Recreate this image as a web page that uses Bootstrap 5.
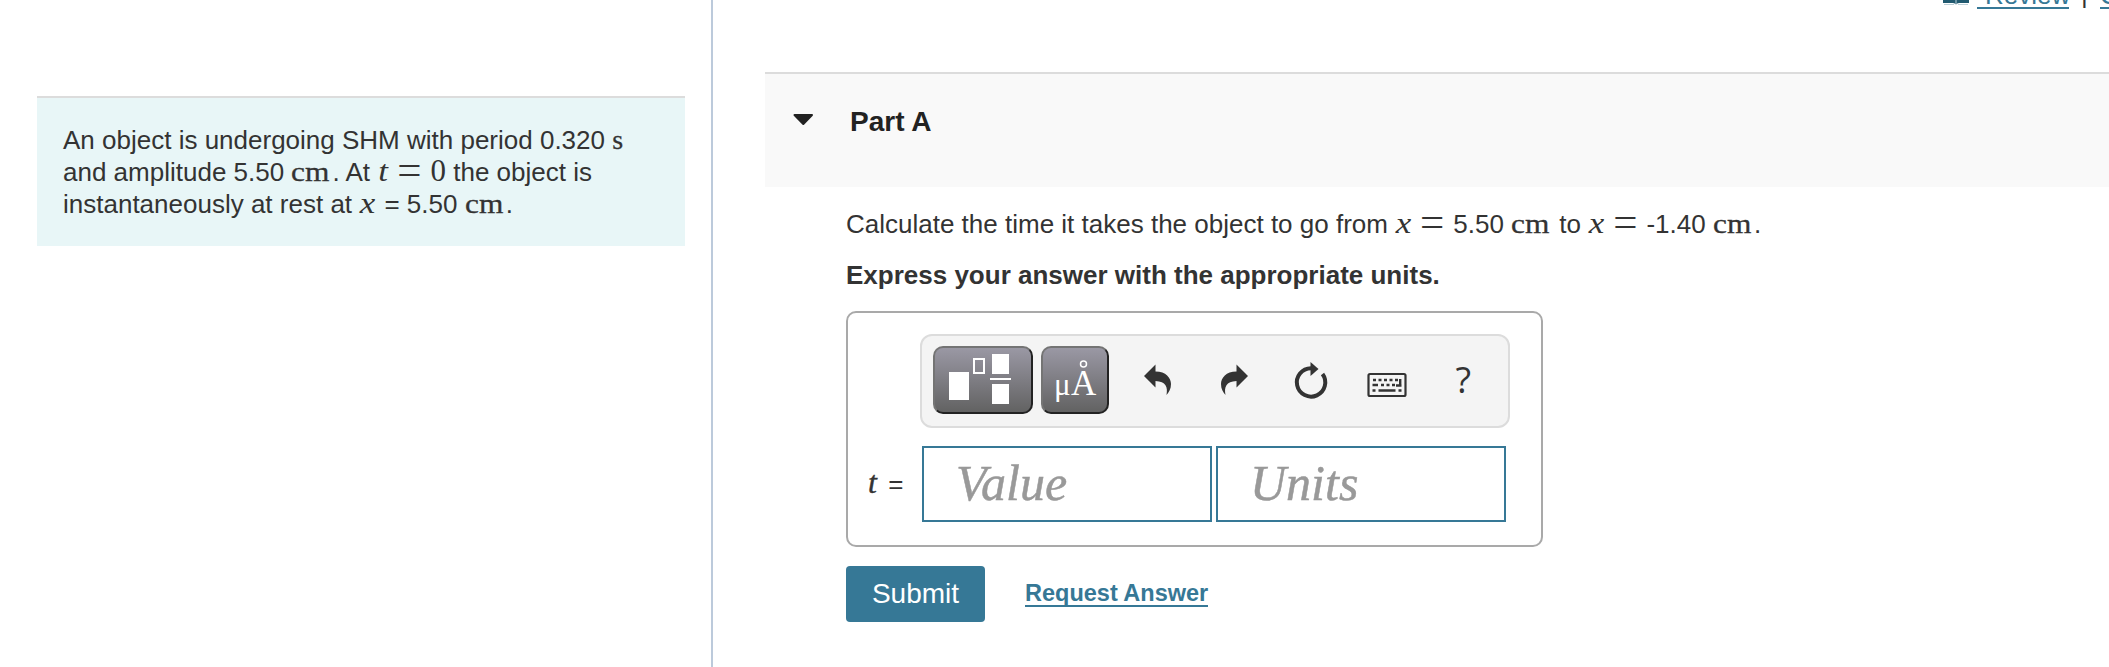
<!DOCTYPE html>
<html lang="en">
<head>
<meta charset="utf-8">
<title>Part A</title>
<link href="https://cdn.jsdelivr.net/npm/bootstrap@5.3.0/dist/css/bootstrap.min.css" rel="stylesheet">
<style>
body{font-family:"Liberation Sans",Arial,sans-serif;font-size:26px;line-height:32px;color:#333;background:#fff;height:667px;overflow:hidden}
.left-pane{width:713px;height:667px;border-right:2px solid #bccadb;padding:96px 26px 0 37px}
.intro{height:150px;background:#e8f6f7;border-top:2px solid #dcdcdc;padding:26px 0 0 26px;white-space:nowrap}
.right-pane{padding-left:52px;height:667px}
.top-links{height:72px;padding-left:1178px;color:#333;white-space:nowrap}
.top-links .linkrow{margin-top:-19px;height:32px}
.top-links a,.req{color:#367896;text-decoration:none;border-bottom:2px solid #367896}
.top-links a{line-height:28px;height:28px;display:block}
.part-head{height:115px;background:#f9f9f9;border-top:2px solid #dcdcdc;padding:0 0 0 28px}
.part-head h2{font-size:28px;line-height:32px;margin:32px 0 0 35px;color:#222;font-weight:700}
.part-head svg{margin-top:40px}
.part-body{padding-left:81px}
.question{margin-top:21px;white-space:nowrap}
.direct{margin-top:19px;font-weight:700}
.un,.var,.eq,.num{font-family:"Liberation Serif",serif;line-height:0;display:inline-block}
.un{font-size:28px;-webkit-text-stroke:.3px #333}
.un.c{width:35.500px;margin-right:5.500px;transform:scaleX(1.12);transform-origin:left}
.var{font-style:italic;font-size:29px;transform:scaleX(1.2);margin:0 3px 0 2px}
.eq{font-size:43px;transform:translate(-1px,3px);margin:0 8px}
.num{font-size:31px}
.answer{width:697px;height:236px;margin-top:20px;border:2px solid #a9a9a9;border-radius:10px;padding:21px 0 0 21px}
.tools{margin-left:51px;width:590px;height:94px;border:2px solid #dcdcdc;border-radius:12px;background:#f4f4f4;padding:10px 0 0 11px}
.tool-btn{height:68px;border:2px solid;border-color:#747474 #222 #222 #747474;border-radius:10px;background:linear-gradient(#9a98a4,#626262);padding:0}
.fields{margin-top:18px}
.lab{width:53px;padding-top:22px}
.lab .var{margin:0 4px 0 -1px;font-size:32px;transform:none;-webkit-text-stroke:.4px #333}
.entry{width:290px;height:76px;border:2px solid #367896;border-radius:0;padding:0 0 2px 32px;margin-right:4px;font:italic 50px/70px "Liberation Serif",serif}
.entry::placeholder{color:#999;opacity:1;-webkit-text-stroke:.5px #999}
.submit{width:139px;height:56px;background:#367896;color:#fff;border:0;border-radius:4px;font-size:28px;padding:0}
.req{font-size:23.5px;line-height:25px;font-weight:700;margin:0 0 0 40px;height:26px}
</style>
</head>
<body>
<div class="d-flex">
  <aside class="left-pane flex-shrink-0">
    <div class="intro">An object is undergoing SHM with period 0.320 <span class="un">s</span><br>and amplitude 5.50 <span class="un c">cm</span>. At <span class="var">t</span><span class="eq">=</span><span class="num">0</span> the object is<br>instantaneously at rest at <span class="var">x</span> = 5.50 <span class="un c">cm</span>.</div>
  </aside>
  <main class="right-pane flex-grow-1 overflow-hidden">
    <div class="top-links overflow-hidden"><div class="linkrow d-flex">
      <svg class="flex-shrink-0" width="26" height="26" viewBox="0 0 26 26"><path fill="#215a70" d="M0 2Q7 0 13 3Q19 0 26 2V22H16Q14 22 13 23.500Q12 22 10 22H0z"/><path stroke="#bcd0d8" fill="none" d="M13 3V23M1 23.500H11M15 23.500H25"/></svg>
      <a class="flex-shrink-0" href="#" style="margin-left:8px;width:92px;padding-left:8px">Review</a><span style="margin:-3px 12px 0 12px">|</span><a class="flex-shrink-0" href="#">Constants</a>
    </div></div>
    <header class="part-head d-flex align-items-start">
      <svg width="22" height="14" viewBox="0 0 22 14"><path fill="#222" stroke="#222" stroke-width="2" stroke-linejoin="round" d="M1.500 1H19L10.300 10z"/></svg>
      <h2>Part A</h2>
    </header>
    <section class="part-body">
      <div class="question">Calculate the time it takes the object to go from <span class="var">x</span><span class="eq">=</span>5.50 <span class="un c">cm</span> to <span class="var">x</span><span class="eq">=</span>-1.40 <span class="un c">cm</span>.</div>
      <div class="direct">Express your answer with the appropriate units.</div>
      <div class="answer">
        <div class="tools d-flex">
          <button class="btn tool-btn" style="width:100px" aria-label="Templates"><svg class="d-block" width="96" height="64" viewBox="0 0 96 64"><g fill="#fff"><path d="M14 24h20v28H14zM57 6h17v20H57zM57 36h17v20H57zM55 30h21v2H55z"/></g><path d="M39 11h10v14H39z" fill="none" stroke="#fff" stroke-width="2"/></svg></button>
          <button class="btn tool-btn ms-2" style="width:68px" aria-label="Units"><svg class="d-block" width="64" height="64" viewBox="0 0 64 64"><text x="11" y="47" fill="#fff" font-family="Liberation Serif, serif" font-size="31">μ</text><text x="28" y="47" fill="#fff" font-family="Liberation Serif, serif" font-size="35">A</text><circle cx="40.500" cy="16" r="3" fill="none" stroke="#fff" stroke-width="1.500"/></svg></button>
          <svg width="380" height="68" viewBox="1109 346 380 68" fill="#333">
            <path d="M1144 376L1155.500 364.500V371.500C1166 371.500 1171 378 1171 384C1171 389 1169 392 1166.500 395C1168 387 1166 381.500 1155.500 381V387.500z"/>
            <path d="M1248 376L1236.500 364.500V371.500C1226 371.500 1221 378 1221 384C1221 389 1223 392 1225.500 395C1224 387 1226 381.500 1236.500 381V387.500z"/>
            <path d="M1311 368.200A14.200 14.200 0 1 0 1322.500 374" fill="none" stroke="#333" stroke-width="4"/><path d="M1310.500 362L1318.500 369L1310.500 376z"/>
            <rect x="1368.500" y="374" width="37" height="22" rx="1.500" fill="none" stroke="#333" stroke-width="2.200"/>
            <path d="M1373 380H1398" fill="none" stroke="#333" stroke-width="2.500" stroke-dasharray="3 2.500"/><path d="M1372.500 385H1378M1381 385h3M1386.500 385h3M1392 385h3M1396 385.500h5.500M1400.200 379v7.500M1372.500 390.500h3M1378.500 390.500h17M1398.500 390.500h3" fill="none" stroke="#333" stroke-width="2.400"/>
            <text x="1455.500" y="392.500" font-family="Open Sans, sans-serif" font-size="36">?</text>
          </svg>
        </div>
        <div class="fields d-flex">
          <div class="lab"><span class="var">t</span> <span>=</span></div>
          <input class="form-control entry" placeholder="Value" aria-label="Value">
          <input class="form-control entry" placeholder="Units" aria-label="Units">
        </div>
      </div>
      <div class="d-flex align-items-center" style="margin-top:19px">
        <button class="btn submit">Submit</button><a class="req" href="#">Request Answer</a>
      </div>
    </section>
  </main>
</div>
<script src="https://cdn.jsdelivr.net/npm/bootstrap@5.3.0/dist/js/bootstrap.bundle.min.js"></script>
</body>
</html>
